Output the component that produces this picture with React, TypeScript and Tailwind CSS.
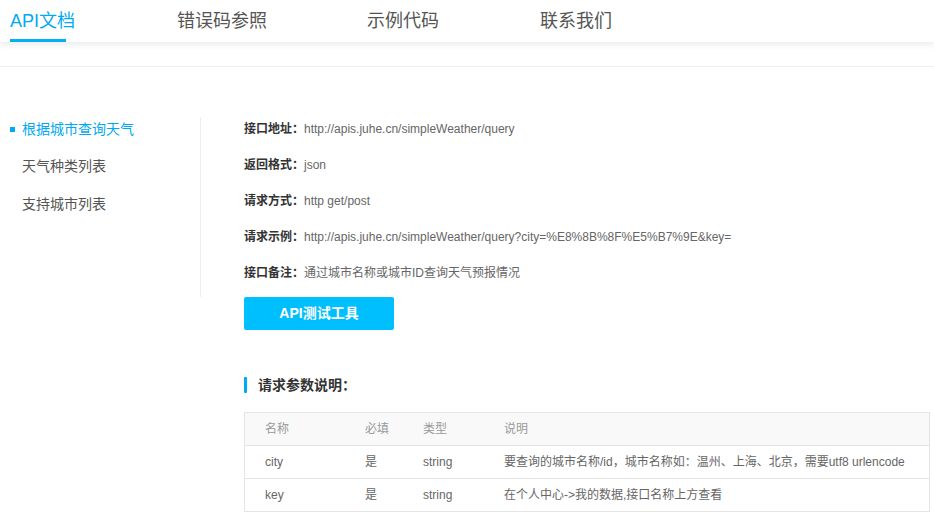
import React from "react";

const font = { fontFamily: '"Liberation Sans", "Noto Sans CJK SC", sans-serif' };

export default function App() {
  const tabs = ["API文档", "错误码参照", "示例代码", "联系我们"];
  const tabX = ["w-[167px]", "w-[190px]", "w-[173px]", "w-[100px]"];
  const info = [
    ["接口地址：", "http://apis.juhe.cn/simpleWeather/query"],
    ["返回格式：", "json"],
    ["请求方式：", "http get/post"],
    ["请求示例：", "http://apis.juhe.cn/simpleWeather/query?city=%E8%8B%8F%E5%B7%9E&key="],
    ["接口备注：", "通过城市名称或城市ID查询天气预报情况"],
  ];
  return (
    <div className="w-[934px] h-[516px] overflow-hidden bg-white" style={font}>
      <div className="h-[42px] bg-white shadow-[0_3px_6px_rgba(0,0,0,0.08)] flex pl-[10px] relative z-10">
        {tabs.map((t, i) => (
          <div key={t} className={`${tabX[i]} h-full flex flex-col`}>
            <div
              className={`h-[39px] pt-[2px] flex items-center text-[18px] leading-none ${
                i === 0 ? "text-[#00a9f4]" : "text-[#555]"
              }`}
            >
              <span>{t}</span>
            </div>
            {i === 0 && <div className="h-[3px] w-[56px] bg-[#00b0f5]" />}
          </div>
        ))}
      </div>
      <div className="h-[25px] border-b border-[#f0f0f0]" />
      <div className="flex pt-[50px]">
        <div className="w-[200px] pl-[10px] flex flex-col gap-[20px] pt-[3px]">
          <div className="flex items-center h-[18px] text-[14px] text-[#00a9f4]">
            <span className="w-[5px] h-[5px] bg-[#00a9f4] mr-[7px]" />
            根据城市查询天气
          </div>
          <div className="flex items-center h-[18px] text-[14px] text-[#555] pl-[12px] -mt-[1px]">天气种类列表</div>
          <div className="flex items-center h-[18px] text-[14px] text-[#555] pl-[12px]">支持城市列表</div>
        </div>
        <div className="flex-1">
          <div className="flex">
            <div className="w-px h-[180px] bg-[#eeeeee]" />
            <div className="pl-[43px] flex flex-col gap-[18px] pt-[3px]">
              {info.map(([k, v]) => (
                <div key={k} className="h-[18px] flex items-center text-[12px]">
                  <span className="font-bold text-[#333]">{k}</span>
                  <span className="text-[#666]">{v}</span>
                </div>
              ))}
            </div>
          </div>
          <div className="pl-[44px]">
            <button className="w-[150px] h-[33px] rounded-[2px] bg-[#00bfff] text-white text-[14px] font-bold">
              API测试工具
            </button>
            <div className="mt-[47px] flex items-center h-[16px]">
              <span className="w-[3px] h-[16px] rounded-[1px] bg-[#00a9f4] mr-[11px]" />
              <span className="text-[14px] font-bold text-[#333]">请求参数说明：</span>
            </div>
            <div className="mt-[19px] w-[686px] border border-[#e5e5e5] text-[12px]">
              <div className="h-[33px] flex items-center bg-[#f9f9f9] text-[#999] border-b border-[#e5e5e5]">
                <span className="w-[100px] pl-[20px]">名称</span>
                <span className="w-[59px] pl-[20px]">必填</span>
                <span className="w-[80px] pl-[19px]">类型</span>
                <span className="pl-[20px]">说明</span>
              </div>
              <div className="h-[33px] flex items-center text-[#666] border-b border-[#e5e5e5]">
                <span className="w-[100px] pl-[20px]">city</span>
                <span className="w-[59px] pl-[20px]">是</span>
                <span className="w-[80px] pl-[19px]">string</span>
                <span className="pl-[20px]">要查询的城市名称/id，城市名称如：温州、上海、北京，需要utf8 urlencode</span>
              </div>
              <div className="h-[32px] flex items-center text-[#666]">
                <span className="w-[100px] pl-[20px]">key</span>
                <span className="w-[59px] pl-[20px]">是</span>
                <span className="w-[80px] pl-[19px]">string</span>
                <span className="pl-[20px]">在个人中心-&gt;我的数据,接口名称上方查看</span>
              </div>
            </div>
          </div>
        </div>
      </div>
    </div>
  );
}
